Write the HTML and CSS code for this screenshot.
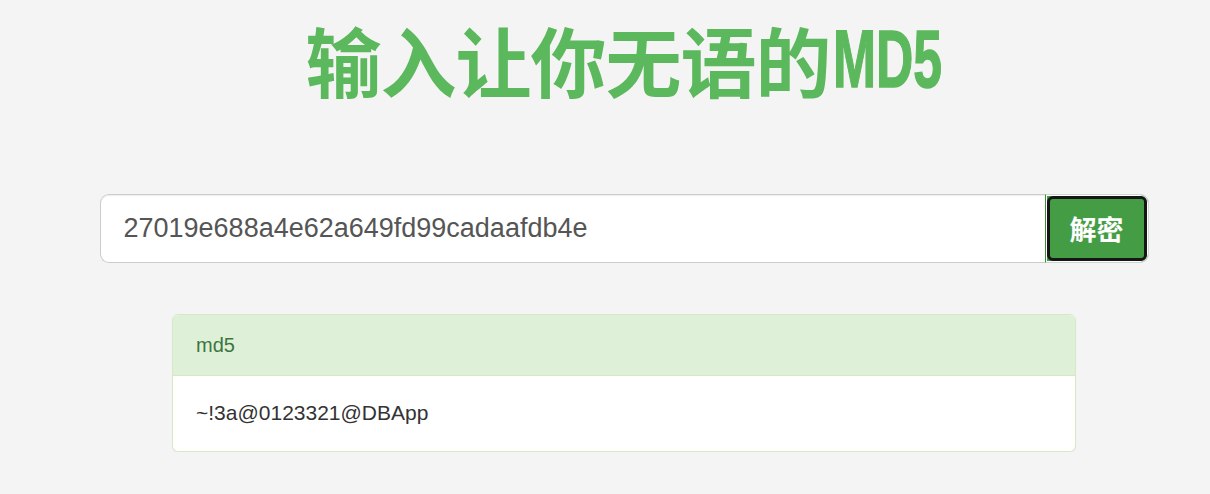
FILE: index.html
```html
<!DOCTYPE html>
<html lang="zh-CN">
<head>
<meta charset="utf-8">
<title>输入让你无语的MD5</title>
<link rel="stylesheet" href="styles.css">
</head>
<body>
<main class="page">
  <h1 class="title">输入让你无语的<span class="title-latin"><span class="title-latin-inner">MD5</span></span></h1>
  <form class="search">
    <input class="search-input" type="text" value="27019e688a4e62a649fd99cadaafdb4e">
    <button class="search-btn" type="button">解密</button>
  </form>
  <section class="panel">
    <div class="panel-heading">md5</div>
    <div class="panel-body">~!3a@0123321@DBApp</div>
  </section>
</main>
</body>
</html>
```

FILE: styles.css
```css
html, body {
  margin: 0;
  padding: 0;
  background: #f4f4f4;
}

body {
  font-family: "Liberation Sans", Arial, "Noto Sans CJK SC", sans-serif;
  color: #333;
}

.page {
  padding-left: 38px;
  display: flex;
  flex-direction: column;
  align-items: center;
}

.title {
  margin: 14px 0 0;
  font-family: "Noto Sans CJK SC", sans-serif;
  font-weight: 700;
  font-size: 76px;
  line-height: 90px;
  letter-spacing: -1px;
  color: #5cb85c;
  white-space: nowrap;
}

.title-latin {
  display: inline-block;
  width: 110px;
  margin-left: 2px;
  font-family: "Liberation Sans", Arial, sans-serif;
  font-size: 82px;
  letter-spacing: 0;
  vertical-align: top;
  line-height: 90px;
  -webkit-text-stroke: 1.5px #5cb85c;
}

.title-latin-inner {
  display: inline-block;
  transform: scale(0.63, 1);
  transform-origin: left center;
}

.search {
  display: flex;
  width: 1049px;
  height: 69px;
  margin-top: 90px;
}

.search-input {
  flex: 1;
  min-width: 0;
  box-sizing: border-box;
  height: 69px;
  margin: 0;
  padding: 0 22px 0 23px;
  border: 1px solid #ccc;
  border-right: 0;
  border-radius: 9px 0 0 9px;
  background: #fff;
  box-shadow: inset 0 1px 1px rgba(0, 0, 0, 0.075);
  font-family: "Liberation Sans", Arial, sans-serif;
  font-size: 27px;
  color: #555;
  outline: none;
}

.search-btn {
  position: relative;
  box-sizing: border-box;
  width: 104px;
  height: 69px;
  margin: 0;
  padding: 0;
  border: 1px solid #cfd8cf;
  border-left: 1px solid #3d8b3d;
  border-radius: 0 9px 9px 0;
  background: #449d44;
  box-shadow: inset 0 0 0 1px #fff;
  color: #fff;
  font-family: "Noto Sans CJK SC", sans-serif;
  font-weight: 700;
  font-size: 27px;
  cursor: pointer;
}

.search-btn::after {
  content: "";
  position: absolute;
  top: 1px;
  left: 1px;
  right: 1px;
  bottom: 1px;
  border: 3px solid #161616;
  border-radius: 6px;
}

.panel {
  box-sizing: border-box;
  width: 904px;
  margin-top: 51px;
  border: 1px solid #d6e9c6;
  border-radius: 6px;
  background: #fff;
  box-shadow: 0 1px 1px rgba(0, 0, 0, 0.05);
  overflow: hidden;
}

.panel-heading {
  padding: 15px 22px 15px 23px;
  background: #dff0d8;
  border-bottom: 1px solid #d6e9c6;
  color: #3c763d;
  font-size: 20px;
  line-height: 30px;
}

.panel-body {
  padding: 22px 22px 23px 23px;
  font-size: 21px;
  line-height: 30px;
  color: #333;
}
```
